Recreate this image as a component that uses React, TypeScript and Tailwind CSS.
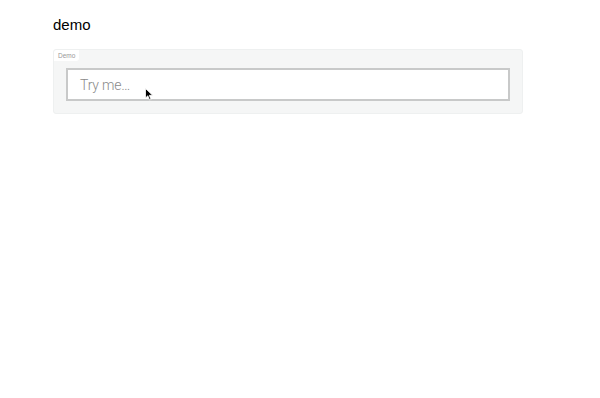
import React from 'react';

const Cursor: React.FC = () => (
  <svg className="absolute left-[145px] top-[88px]" width="9" height="13" viewBox="0 0 9 13">
    <path d="M0.5 0.5 L0.5 10 L2.8 7.8 L4.6 12 L6 11.4 L4.3 7.3 L7.6 7.3 Z" fill="#000" stroke="#fff" strokeWidth="0.8" />
  </svg>
);

const App: React.FC = () => {
  return (
    <div className="relative w-[600px] h-[398px] bg-white font-['Liberation_Sans',Arial,sans-serif]">
      <div className="pl-[53px] pt-[15px]">
        <h1 className="text-[15px] leading-[20px] text-black">demo</h1>

        <div className="mt-[14px] w-[470px] bg-[#f5f6f6] rounded-[3px] border border-[#eef0f0]">
          <div className="flex">
            <span className="bg-white rounded-tl-[3px] rounded-br-[3px] px-[4px] text-[6.5px] leading-[11px] text-[#999]">Demo</span>
          </div>
          <div className="px-[12px] pt-[7px] pb-[12px]">
            <div className="h-[33px] border-2 border-[#c8c9c9] bg-white flex items-center px-[12px] pt-[1px]">
              <span className="font-['Roboto',sans-serif] font-light text-[14px] tracking-[-0.2px] text-[#8a8a8a]">Try me…</span>
            </div>
          </div>
        </div>
      </div>
      <Cursor />
    </div>
  );
};

export default App;
